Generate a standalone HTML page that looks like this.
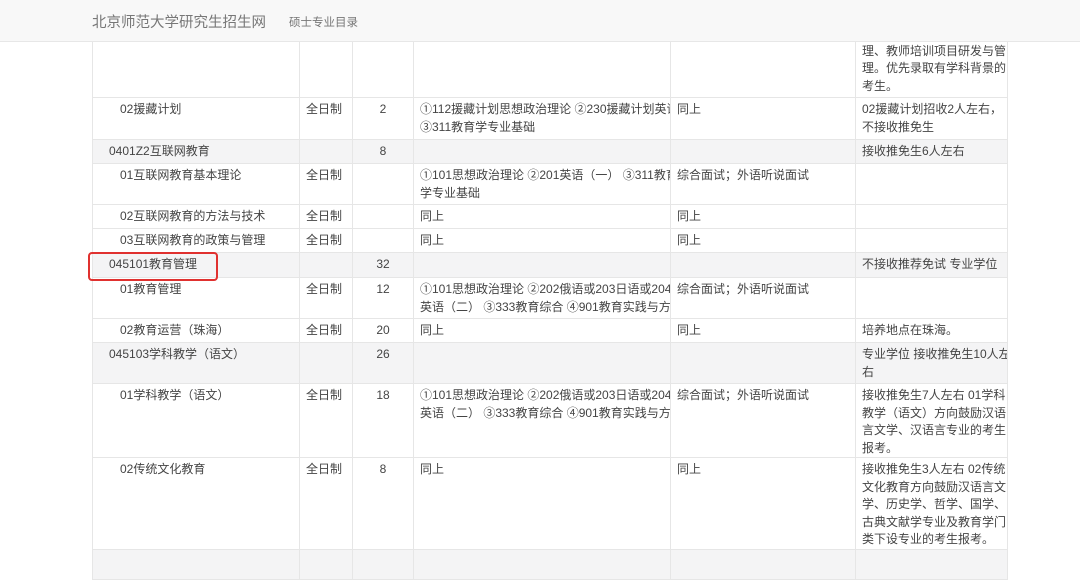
<!DOCTYPE html>
<html><head><meta charset="utf-8"><style>
*{margin:0;padding:0;box-sizing:border-box}
body{width:1080px;height:552px;overflow:hidden;background:#fff;position:relative;font-family:"Liberation Sans","Noto Sans CJK SC",sans-serif;font-size:12px;color:#444}
.hdr{position:absolute;left:0;top:0;width:1080px;height:42px;background:#f8f8f8;border-bottom:1px solid #e7e7e7;z-index:5}
.hdr .t{position:absolute;left:92px;top:11px;font-size:14.5px;color:#777;white-space:nowrap}
.hdr .s{position:absolute;left:289px;top:14px;font-size:11.5px;color:#777;white-space:nowrap}
table{position:absolute;left:92px;top:0;border-collapse:collapse;table-layout:fixed;width:915px}
td{border:1px solid #e6e6e6;vertical-align:top;padding:3px 0 0 6px;line-height:17.5px;overflow:hidden;white-space:nowrap}
tr.g td{background:#f4f4f5}
td.a{padding-left:27px}
tr.g td.a{padding-left:16px}
td.n{text-align:center;padding-left:0;padding-right:0}
.box{position:absolute;left:88px;top:252px;width:130px;height:29px;border:2px solid #e0312f;border-radius:4px;z-index:3}
</style></head><body>
<div class="hdr"><span class="t">北京师范大学研究生招生网</span><span class="s">硕士专业目录</span></div>
<table>
<colgroup><col style="width:207px"><col style="width:53px"><col style="width:61px"><col style="width:257px"><col style="width:185px"><col style="width:152px"></colgroup>
<tr style="height:97px"><td class="a"></td><td></td><td class="n"></td><td></td><td></td><td style="padding-top:24px">教师专业发展研究与管<br>理、教师培训项目研发与管<br>理。优先录取有学科背景的<br>考生。</td></tr>
<tr style="height:42px"><td class="a">02援藏计划</td><td>全日制</td><td class="n">2</td><td>①112援藏计划思想政治理论 ②230援藏计划英语<br>③311教育学专业基础</td><td>同上</td><td>02援藏计划招收2人左右，<br>不接收推免生</td></tr>
<tr class="g" style="height:24px"><td class="a">0401Z2互联网教育</td><td></td><td class="n">8</td><td></td><td></td><td>接收推免生6人左右</td></tr>
<tr style="height:41px"><td class="a">01互联网教育基本理论</td><td>全日制</td><td class="n"></td><td>①101思想政治理论 ②201英语（一） ③311教育<br>学专业基础</td><td>综合面试；外语听说面试</td><td></td></tr>
<tr style="height:24px"><td class="a">02互联网教育的方法与技术</td><td>全日制</td><td class="n"></td><td>同上</td><td>同上</td><td></td></tr>
<tr style="height:24px"><td class="a">03互联网教育的政策与管理</td><td>全日制</td><td class="n"></td><td>同上</td><td>同上</td><td></td></tr>
<tr class="g" style="height:25px"><td class="a">045101教育管理</td><td></td><td class="n">32</td><td></td><td></td><td>不接收推荐免试 专业学位</td></tr>
<tr style="height:41px"><td class="a">01教育管理</td><td>全日制</td><td class="n">12</td><td>①101思想政治理论 ②202俄语或203日语或204<br>英语（二） ③333教育综合 ④901教育实践与方法</td><td>综合面试；外语听说面试</td><td></td></tr>
<tr style="height:24px"><td class="a">02教育运营（珠海）</td><td>全日制</td><td class="n">20</td><td>同上</td><td>同上</td><td>培养地点在珠海。</td></tr>
<tr class="g" style="height:41px"><td class="a">045103学科教学（语文）</td><td></td><td class="n">26</td><td></td><td></td><td>专业学位 接收推免生10人左<br>右</td></tr>
<tr style="height:73px"><td class="a">01学科教学（语文）</td><td>全日制</td><td class="n">18</td><td>①101思想政治理论 ②202俄语或203日语或204<br>英语（二） ③333教育综合 ④901教育实践与方法</td><td>综合面试；外语听说面试</td><td>接收推免生7人左右 01学科<br>教学（语文）方向鼓励汉语<br>言文学、汉语言专业的考生<br>报考。</td></tr>
<tr style="height:88px"><td class="a">02传统文化教育</td><td>全日制</td><td class="n">8</td><td>同上</td><td>同上</td><td>接收推免生3人左右 02传统<br>文化教育方向鼓励汉语言文<br>学、历史学、哲学、国学、<br>古典文献学专业及教育学门<br>类下设专业的考生报考。</td></tr>
<tr class="g" style="height:30px"><td class="a"></td><td></td><td class="n"></td><td></td><td></td><td></td></tr>
</table>
<div class="box"></div>
</body></html>
